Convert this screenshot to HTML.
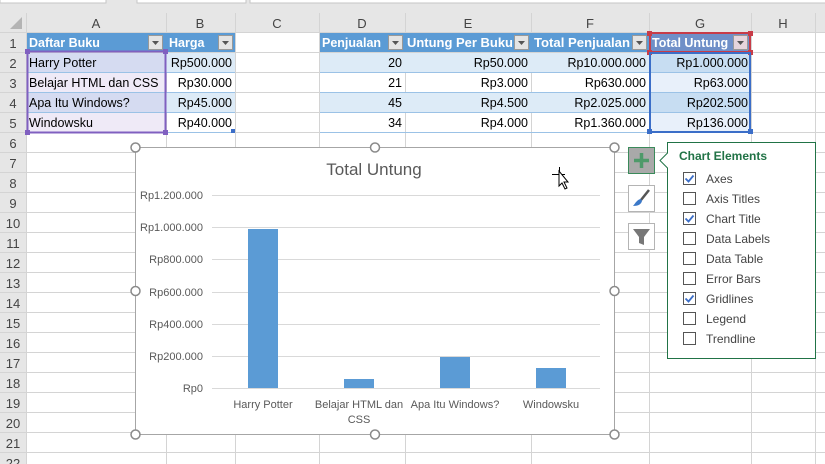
<!DOCTYPE html>
<html><head><meta charset="utf-8"><style>
body{margin:0;width:825px;height:464px;overflow:hidden;background:#fff;font-family:"Liberation Sans",sans-serif}
svg{position:absolute;left:0;top:0}
</style></head><body>
<svg width="825" height="464" xmlns="http://www.w3.org/2000/svg" font-family="Liberation Sans, sans-serif">
<rect x="0" y="0" width="825" height="13" fill="#e6e6e6"/>
<rect x="0" y="-1" width="106" height="4" fill="#fff" stroke="#c6c6c6"/>
<rect x="137" y="-1" width="109" height="4" fill="#fff" stroke="#c6c6c6"/>
<rect x="250" y="-1" width="580" height="4" fill="#fff" stroke="#c6c6c6"/>
<rect x="0" y="13" width="825" height="20" fill="#e6e6e6"/>
<rect x="0" y="13" width="26" height="451" fill="#e6e6e6"/>
<polygon points="22,17 22,29 10,29" fill="#b4b4b4"/>
<g stroke="#d4d4d4" stroke-width="1">
<line x1="26.5" y1="13" x2="26.5" y2="464"/>
<line x1="166.5" y1="13" x2="166.5" y2="464"/>
<line x1="235.5" y1="13" x2="235.5" y2="464"/>
<line x1="319.5" y1="13" x2="319.5" y2="464"/>
<line x1="405.5" y1="13" x2="405.5" y2="464"/>
<line x1="531.5" y1="13" x2="531.5" y2="464"/>
<line x1="649.5" y1="13" x2="649.5" y2="464"/>
<line x1="751.5" y1="13" x2="751.5" y2="464"/>
<line x1="815.5" y1="13" x2="815.5" y2="464"/>
<line x1="0" y1="32.5" x2="825" y2="32.5"/>
<line x1="0" y1="52.5" x2="825" y2="52.5"/>
<line x1="0" y1="72.5" x2="825" y2="72.5"/>
<line x1="0" y1="92.5" x2="825" y2="92.5"/>
<line x1="0" y1="112.5" x2="825" y2="112.5"/>
<line x1="0" y1="132.5" x2="825" y2="132.5"/>
<line x1="0" y1="152.5" x2="825" y2="152.5"/>
<line x1="0" y1="172.5" x2="825" y2="172.5"/>
<line x1="0" y1="192.5" x2="825" y2="192.5"/>
<line x1="0" y1="212.5" x2="825" y2="212.5"/>
<line x1="0" y1="232.5" x2="825" y2="232.5"/>
<line x1="0" y1="252.5" x2="825" y2="252.5"/>
<line x1="0" y1="272.5" x2="825" y2="272.5"/>
<line x1="0" y1="292.5" x2="825" y2="292.5"/>
<line x1="0" y1="312.5" x2="825" y2="312.5"/>
<line x1="0" y1="332.5" x2="825" y2="332.5"/>
<line x1="0" y1="352.5" x2="825" y2="352.5"/>
<line x1="0" y1="372.5" x2="825" y2="372.5"/>
<line x1="0" y1="392.5" x2="825" y2="392.5"/>
<line x1="0" y1="412.5" x2="825" y2="412.5"/>
<line x1="0" y1="432.5" x2="825" y2="432.5"/>
<line x1="0" y1="452.5" x2="825" y2="452.5"/>
</g>
<g font-size="13" fill="#444" text-anchor="middle">
<text x="96" y="28">A</text><text x="200" y="28">B</text><text x="277" y="28">C</text><text x="362" y="28">D</text><text x="468" y="28">E</text><text x="590" y="28">F</text><text x="700" y="28">G</text><text x="783" y="28">H</text>
</g>
<g font-size="13" fill="#444" text-anchor="middle">
<text x="13" y="48">1</text><text x="13" y="68">2</text><text x="13" y="88">3</text><text x="13" y="108">4</text><text x="13" y="128">5</text><text x="13" y="148">6</text><text x="13" y="168">7</text><text x="13" y="188">8</text><text x="13" y="208">9</text><text x="13" y="228">10</text><text x="13" y="248">11</text><text x="13" y="268">12</text><text x="13" y="288">13</text><text x="13" y="308">14</text><text x="13" y="328">15</text><text x="13" y="348">16</text><text x="13" y="368">17</text><text x="13" y="388">18</text><text x="13" y="408">19</text><text x="13" y="428">20</text><text x="13" y="448">21</text><text x="13" y="468">22</text>
</g>
<rect x="27" y="33" width="208" height="19" fill="#5b9bd5"/>
<rect x="320" y="33" width="431" height="19" fill="#5b9bd5"/>
<rect x="649" y="33" width="102" height="19" fill="#6f8fc8"/>
<rect x="27" y="53" width="208" height="19" fill="#ddebf7"/><rect x="320" y="53" width="431" height="19" fill="#ddebf7"/>
<rect x="27" y="93" width="208" height="19" fill="#ddebf7"/><rect x="320" y="93" width="431" height="19" fill="#ddebf7"/>
<rect x="27" y="53" width="139" height="80" fill="#efeaf7"/>
<rect x="27" y="53" width="139" height="19" fill="#d5dbf1"/><rect x="27" y="93" width="139" height="19" fill="#d5dbf1"/>
<rect x="650" y="53" width="101" height="80" fill="#e8f0fa"/>
<rect x="650" y="53" width="101" height="19" fill="#c7ddf2"/><rect x="650" y="93" width="101" height="19" fill="#c7ddf2"/>
<g stroke="#9bc2e6"><line x1="27" y1="72.5" x2="235" y2="72.5"/><line x1="27" y1="92.5" x2="235" y2="92.5"/><line x1="27" y1="112.5" x2="235" y2="112.5"/><line x1="27" y1="132.5" x2="235" y2="132.5"/>
<line x1="320" y1="72.5" x2="751" y2="72.5"/><line x1="320" y1="92.5" x2="751" y2="92.5"/><line x1="320" y1="112.5" x2="751" y2="112.5"/><line x1="320" y1="132.5" x2="751" y2="132.5"/></g>
<g fill="#fff" font-weight="bold" font-size="12.5">
<text x="29" y="47">Daftar Buku</text><text x="169" y="47">Harga</text><text x="322" y="47">Penjualan</text><text x="407" y="47" textLength="106" lengthAdjust="spacingAndGlyphs">Untung Per Buku</text><text x="534" y="47" textLength="96" lengthAdjust="spacingAndGlyphs">Total Penjualan</text><text x="652" y="47">Total Untung</text>
</g>
<g fill="#e4e4e4" stroke="#999"><rect x="148.5" y="35.5" width="14" height="14"/><rect x="218.5" y="35.5" width="14" height="14"/><rect x="388.5" y="35.5" width="14" height="14"/><rect x="514.5" y="35.5" width="14" height="14"/><rect x="632.5" y="35.5" width="14" height="14"/><rect x="733.5" y="35.5" width="14" height="14" fill="#e6d5dc"/></g>
<g fill="#555"><polygon points="152,41 159,41 155.5,45"/><polygon points="222,41 229,41 225.5,45"/><polygon points="392,41 399,41 395.5,45"/><polygon points="518,41 525,41 521.5,45"/><polygon points="636,41 643,41 639.5,45"/><polygon points="737,41 744,41 740.5,45"/></g>
<g font-size="12.5" fill="#000">
<text x="29" y="67">Harry Potter</text><text x="29" y="87">Belajar HTML dan CSS</text><text x="29" y="107">Apa Itu Windows?</text><text x="29" y="127">Windowsku</text>
</g>
<g font-size="12.5" fill="#000" text-anchor="end">
<text x="232" y="67">Rp500.000</text><text x="232" y="87">Rp30.000</text><text x="232" y="107">Rp45.000</text><text x="232" y="127">Rp40.000</text>
<text x="402" y="67">20</text><text x="402" y="87">21</text><text x="402" y="107">45</text><text x="402" y="127">34</text>
<text x="528" y="67">Rp50.000</text><text x="528" y="87">Rp3.000</text><text x="528" y="107">Rp4.500</text><text x="528" y="127">Rp4.000</text>
<text x="646" y="67">Rp10.000.000</text><text x="646" y="87">Rp630.000</text><text x="646" y="107">Rp2.025.000</text><text x="646" y="127">Rp1.360.000</text>
<text x="748" y="67">Rp1.000.000</text><text x="748" y="87">Rp63.000</text><text x="748" y="107">Rp202.500</text><text x="748" y="127">Rp136.000</text>
</g>
<rect x="27.5" y="51.5" width="138" height="81" fill="none" stroke="#8060c0" stroke-width="2"/>
<g fill="#8060c0"><rect x="25" y="49" width="5" height="5"/><rect x="163" y="49" width="5" height="5"/><rect x="25" y="130" width="5" height="5"/><rect x="163" y="130" width="5" height="5"/></g>
<rect x="231" y="129" width="4" height="4" fill="#3b6ec8"/>
<rect x="650" y="33" width="100" height="19" fill="none" stroke="#c83c48" stroke-width="2"/>
<g fill="#c83c48"><rect x="647" y="31" width="5" height="5"/><rect x="748" y="31" width="5" height="5"/><rect x="647" y="50" width="5" height="5"/><rect x="748" y="50" width="5" height="5"/></g>
<rect x="650" y="53" width="100" height="79" fill="none" stroke="#3b6ec8" stroke-width="2"/>
<g fill="#3b6ec8"><rect x="647" y="129" width="5" height="5"/><rect x="748" y="129" width="5" height="5"/></g>
<rect x="135.5" y="147.5" width="479" height="287" fill="#fff" stroke="#a6a6a6"/>
<text x="374" y="175" text-anchor="middle" font-size="17" fill="#595959">Total Untung</text>
<g stroke="#d9d9d9"><line x1="212" y1="195.5" x2="600" y2="195.5"/><line x1="212" y1="227.5" x2="600" y2="227.5"/><line x1="212" y1="259.5" x2="600" y2="259.5"/><line x1="212" y1="292.5" x2="600" y2="292.5"/><line x1="212" y1="324.5" x2="600" y2="324.5"/><line x1="212" y1="356.5" x2="600" y2="356.5"/><line x1="212" y1="388.5" x2="600" y2="388.5"/></g>
<g font-size="11" fill="#595959" text-anchor="end">
<text x="203" y="199">Rp1.200.000</text><text x="203" y="231">Rp1.000.000</text><text x="203" y="263">Rp800.000</text><text x="203" y="296">Rp600.000</text><text x="203" y="328">Rp400.000</text><text x="203" y="360">Rp200.000</text><text x="203" y="392">Rp0</text>
</g>
<g fill="#5b9bd5"><rect x="248" y="229" width="30" height="159"/><rect x="344" y="379" width="30" height="9"/><rect x="440" y="357" width="30" height="31"/><rect x="536" y="368" width="30" height="20"/></g>
<g font-size="11" fill="#595959" text-anchor="middle">
<text x="263" y="408">Harry Potter</text><text x="359" y="408">Belajar HTML dan</text><text x="359" y="423">CSS</text><text x="455" y="408">Apa Itu Windows?</text><text x="551" y="408">Windowsku</text>
</g>
<g fill="#fff" stroke="#8a8a8a" stroke-width="1.5"><circle cx="135.5" cy="147.5" r="4.5"/><circle cx="375" cy="147.5" r="4.5"/><circle cx="614.5" cy="147.5" r="4.5"/><circle cx="135.5" cy="291" r="4.5"/><circle cx="614.5" cy="291" r="4.5"/><circle cx="135.5" cy="434.5" r="4.5"/><circle cx="375" cy="434.5" r="4.5"/><circle cx="614.5" cy="434.5" r="4.5"/></g>
<g stroke="#000" stroke-width="1" fill="none"><line x1="552" y1="174.5" x2="565" y2="174.5"/><line x1="559.5" y1="167" x2="559.5" y2="181"/></g>
<path d="M559,171 L559,186 L562,183 L565,189 L567,188 L564,182 L568,182 Z" fill="#fff" stroke="#000"/>
<rect x="628.5" y="147.5" width="26" height="26" fill="#a9a9a9" stroke="#3a8a5a"/>
<path d="M641.5,153 v15 M634,160.5 h15" stroke="#4e9a6a" stroke-width="3.5"/>
<rect x="628.5" y="185.5" width="26" height="26" fill="#fff" stroke="#b4b4b4"/>
<path d="M649,190 L641,200" stroke="#555" stroke-width="2.5"/>
<path d="M641,199 C638,199 636,202 633,206 C637,206 641,205 642,201 Z" fill="#3b78c8"/>
<rect x="628.5" y="223.5" width="26" height="26" fill="#fff" stroke="#b4b4b4"/>
<path d="M633,229 h17 l-6,8 v8 l-5,-2 v-6 Z" fill="#777"/>
<path d="M667.5,142.5 H815.5 V358.5 H667.5 V168 L660,160.5 L667.5,153 Z" fill="#fff" stroke="#217346"/>
<text x="679" y="160" font-size="12" font-weight="bold" fill="#217346">Chart Elements</text>
<g fill="#fff" stroke="#555"><rect x="683.5" y="172.5" width="12" height="12"/><rect x="683.5" y="192.5" width="12" height="12"/><rect x="683.5" y="212.5" width="12" height="12"/><rect x="683.5" y="232.5" width="12" height="12"/><rect x="683.5" y="252.5" width="12" height="12"/><rect x="683.5" y="272.5" width="12" height="12"/><rect x="683.5" y="292.5" width="12" height="12"/><rect x="683.5" y="312.5" width="12" height="12"/><rect x="683.5" y="332.5" width="12" height="12"/></g>
<g fill="none" stroke="#3b6ec8" stroke-width="1.8"><path d="M685.5,178.5 l3,3 l5,-6"/><path d="M685.5,218.5 l3,3 l5,-6"/><path d="M685.5,298.5 l3,3 l5,-6"/></g>
<g font-size="12" fill="#444">
<text x="706" y="183">Axes</text><text x="706" y="203">Axis Titles</text><text x="706" y="223">Chart Title</text><text x="706" y="243">Data Labels</text><text x="706" y="263">Data Table</text><text x="706" y="283">Error Bars</text><text x="706" y="303">Gridlines</text><text x="706" y="323">Legend</text><text x="706" y="343">Trendline</text>
</g>
</svg>
</body></html>
